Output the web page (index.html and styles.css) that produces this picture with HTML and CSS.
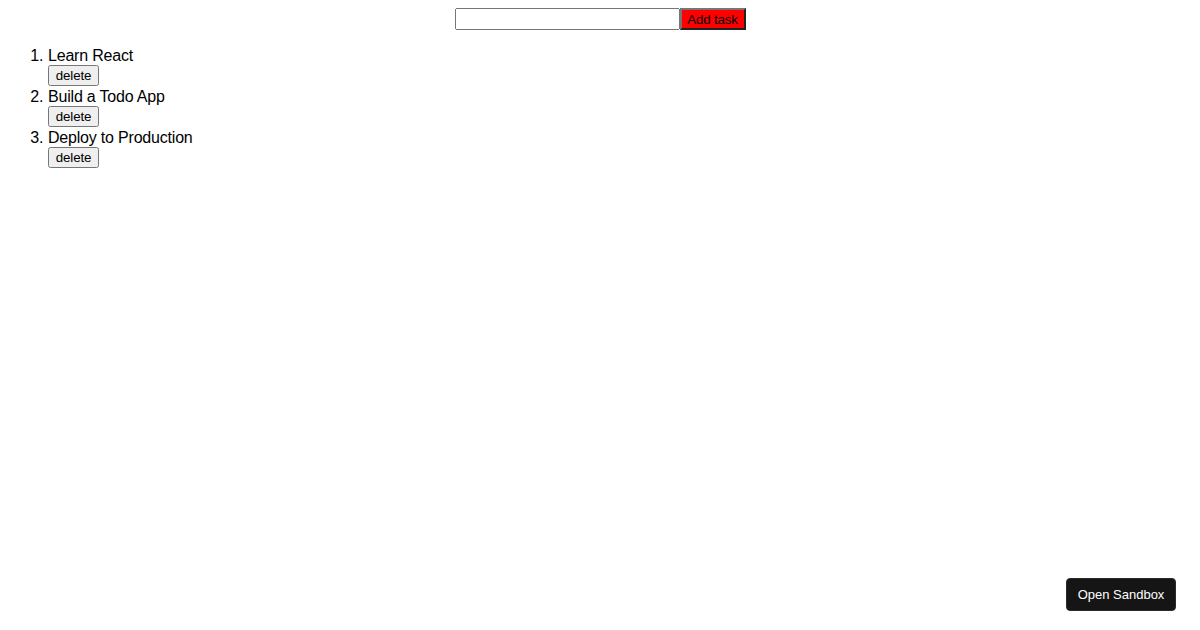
FILE: index.html
```html
<!DOCTYPE html>
<html>
<head>
<meta charset="utf-8">
<link rel="stylesheet" href="styles.css">
</head>
<body>
<div class="form"><input class="task-input" type="text"><button class="add-btn">Add task</button></div>
<ol class="tasks">
  <li><span class="label">Learn React</span><div><button class="del">delete</button></div></li>
  <li><span class="label">Build a Todo App</span><div><button class="del">delete</button></div></li>
  <li><span class="label">Deploy to Production</span><div><button class="del">delete</button></div></li>
</ol>
<button class="sandbox">Open Sandbox</button>
</body>
</html>
```
FILE: styles.css
```css
body {
  margin: 8px;
  font-family: "Liberation Sans", Arial, sans-serif;
  font-size: 16px;
  color: #000;
  background: #fff;
}
.form {
  text-align: center;
}
.task-input {
  box-sizing: border-box;
  width: 225px;
  height: 22px;
  margin: 0;
  vertical-align: bottom;
  font-family: "Liberation Sans", Arial, sans-serif;
}
.add-btn {
  box-sizing: border-box;
  width: 66px;
  height: 22px;
  margin: 0;
  vertical-align: bottom;
  white-space: nowrap;
  background: #ff0000;
  border: 2px outset #767676;
  font-family: "Liberation Sans", Arial, sans-serif;
  font-size: 13.33px;
  letter-spacing: -0.2px;
  color: #000;
  padding: 1px 4px;
}
.tasks {
  margin: 17px 0 16px;
  padding-left: 40px;
}
.label {
  letter-spacing: -0.2px;
}
.del {
  width: 51px;
  margin: 0 0 2px;
  padding: 1px 4px;
  font-family: "Liberation Sans", Arial, sans-serif;
  font-size: 13.33px;
  letter-spacing: -0.1px;
}
.sandbox {
  position: fixed;
  right: 24px;
  bottom: 19px;
  width: 110px;
  height: 33px;
  background: #151515;
  color: #fff;
  border: 1px solid #2a2a2a;
  border-radius: 4px;
  font-family: "Liberation Sans", Arial, sans-serif;
  font-size: 13px;
  cursor: pointer;
}
```
